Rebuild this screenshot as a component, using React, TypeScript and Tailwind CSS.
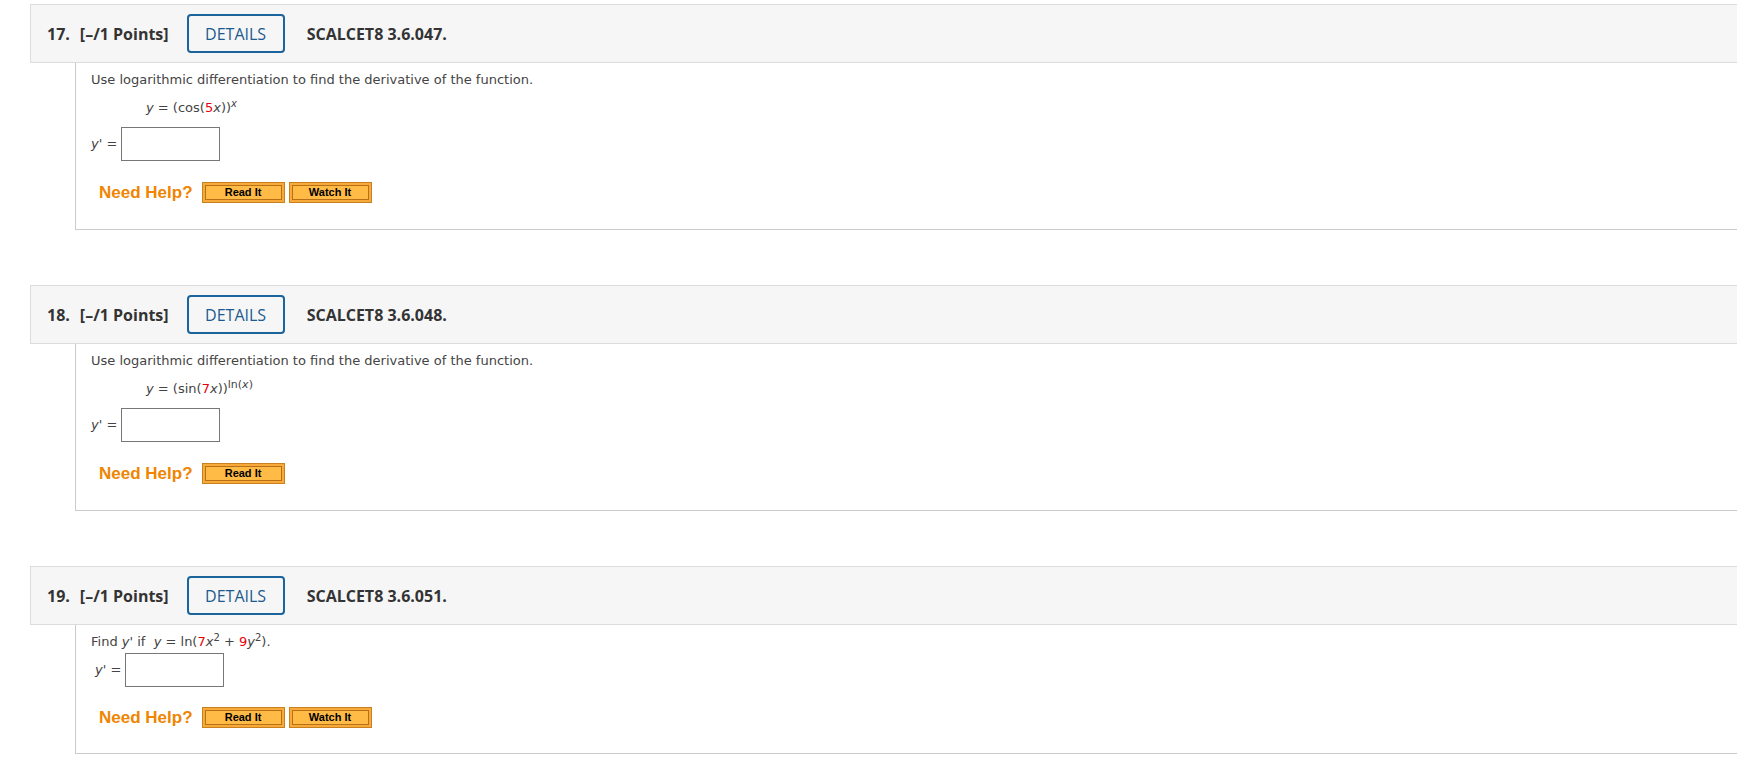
import React from "react";

const body = "font-['DejaVu_Sans',Verdana,sans-serif] text-[13px] text-[#444]";

function Red({ children }: { children: React.ReactNode }) {
  return <span className="text-[#e8000b]">{children}</span>;
}

function HelpButton({ label }: { label: string }) {
  return (
    <button className="h-[21px] w-[83px] border border-[#c9801f] bg-[#f7a93a] p-[2px]">
      <span className="flex h-full w-full items-center justify-center border border-[#b87016] bg-[#ffbb45] font-['Liberation_Sans',Arial,sans-serif] text-[11px] font-bold leading-none text-black">
        {label}
      </span>
    </button>
  );
}

function Header({ num, code }: { num: number; code: string }) {
  return (
    <div className="flex h-[59px] items-center border border-r-0 border-[#dcdcdc] bg-[#f6f6f6] pl-[16px] font-['Open_Sans',sans-serif] text-[16px] text-[#333]">
      <span className="font-bold">{num}.</span>
      <span className="ml-[10px] font-bold">[–/1 Points]</span>
      <span className="ml-[18px] flex h-[39px] w-[98px] items-center justify-center rounded-[4px] border-2 border-[#1b649c] text-[#1c5a8f]">
        DETAILS
      </span>
      <span className="ml-[22px] font-bold">{code}</span>
    </div>
  );
}

function Answer({ indent = 0 }: { indent?: number }) {
  return (
    <div className={`flex items-center ${indent ? "pl-[4px]" : ""}`}>
      <span className="w-[30px]">
        <i>y</i>' =
      </span>
      <div className="h-[34px] w-[99px] border border-[#777] bg-white" />
    </div>
  );
}

function Help({ watch }: { watch: boolean }) {
  return (
    <div className="flex h-[21px] items-center pl-[8px]">
      <span className="font-['Liberation_Sans',Arial,sans-serif] text-[17px] font-bold text-[#ef8500]">
        Need Help?
      </span>
      <div className="ml-[9px] flex gap-[4px]">
        <HelpButton label="Read It" />
        {watch && <HelpButton label="Watch It" />}
      </div>
    </div>
  );
}

function Problem({
  num,
  code,
  children,
  watch,
  last,
}: {
  num: number;
  code: string;
  children: React.ReactNode;
  watch: boolean;
  last?: boolean;
}) {
  return (
    <div className={last ? "" : "mb-[55px]"}>
      <Header num={num} code={code} />
      <div className={`ml-[45px] border-b border-l border-[#cbcbcb] pl-[15px] ${body}`}>
        {children}
        <div className={last ? "mt-[20px] pb-[25px]" : "mt-[21px] pb-[26px]"}>
          <Help watch={watch} />
        </div>
      </div>
    </div>
  );
}

export default function App() {
  return (
    <div className="min-h-screen w-full overflow-hidden bg-white">
      <div className="w-[1780px] pl-[30px] pt-[4px]">
        <Problem num={17} code="SCALCET8 3.6.047." watch>
          <div className="h-[16px] pt-[9px] leading-[16px] box-content">
            Use logarithmic differentiation to find the derivative of the function.
          </div>
          <div className="mt-[12px] h-[16px] pl-[55px] leading-[16px]">
            <i>y</i> = (cos(<Red>5</Red>
            <i>x</i>))<sup className="text-[10px]"><i>x</i></sup>
          </div>
          <div className="mt-[11px]">
            <Answer />
          </div>
        </Problem>

        <Problem num={18} code="SCALCET8 3.6.048." watch={false}>
          <div className="h-[16px] pt-[9px] leading-[16px] box-content">
            Use logarithmic differentiation to find the derivative of the function.
          </div>
          <div className="mt-[12px] h-[16px] pl-[55px] leading-[16px]">
            <i>y</i> = (sin(<Red>7</Red>
            <i>x</i>))
            <sup className="text-[11px]">
              ln(<i>x</i>)
            </sup>
          </div>
          <div className="mt-[11px]">
            <Answer />
          </div>
        </Problem>

        <Problem num={19} code="SCALCET8 3.6.051." watch last>
          <div className="h-[16px] pt-[9px] leading-[16px] box-content">
            Find <i>y</i>' if&nbsp; <i>y</i> = ln(<Red>7</Red>
            <i>x</i>
            <sup className="text-[10px]">2</sup> + <Red>9</Red>
            <i>y</i>
            <sup className="text-[10px]">2</sup>).
          </div>
          <div className="mt-[3px]">
            <Answer indent={4} />
          </div>
        </Problem>
      </div>
    </div>
  );
}
